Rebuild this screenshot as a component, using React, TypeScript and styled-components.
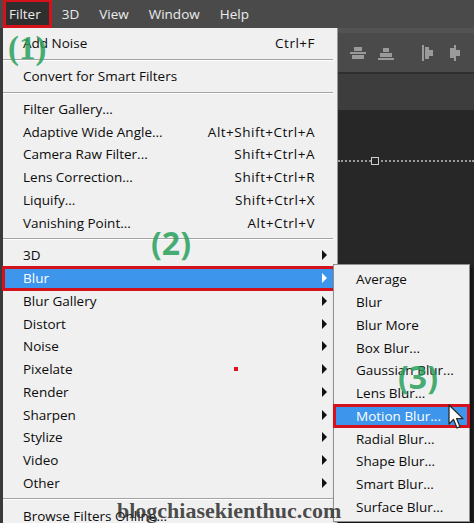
import React from "react";
import styled, { createGlobalStyle } from "styled-components";

const GlobalStyle = createGlobalStyle`
  html, body {
    margin: 0;
    padding: 0;
    background: #282828;
  }
`;

const Screen = styled.div`
  position: relative;
  width: 474px;
  height: 523px;
  overflow: hidden;
  background: #282828;
  font-family: "Open Sans", "Noto Sans", sans-serif;
  display: flex;
  flex-direction: column;
`;

const MenuBar = styled.div`
  height: 28px;
  flex: none;
  display: flex;
  align-items: stretch;
  background: #4a4a4a;
  padding-left: 3px;
`;

const MenuBarItem = styled.div<{ active?: boolean }>`
  display: flex;
  align-items: center;
  padding: 0 10px;
  color: #ececec;
  font-size: 13.5px;
  box-sizing: border-box;
  ${({ active }) =>
    active &&
    `
    background: #2f2f2f;
    border: 3px solid #d3121c;
    border-top-width: 2px;
    padding: 0 8px 0 3px;
  `}
`;

const Body = styled.div`
  flex: 1;
  display: flex;
  min-height: 0;
`;

const Gutter = styled.div`
  width: 3px;
  flex: none;
  background: #3a3a3a;
`;

const Dropdown = styled.div`
  width: 334px;
  flex: none;
  background: #f0f0f0;
  border-right: 1px solid #9a9a9a;
  padding-top: 4px;
  box-sizing: content-box;
`;

const Row = styled.div<{ selected?: boolean; indent?: number }>`
  position: relative;
  height: 22.75px;
  display: flex;
  align-items: center;
  padding: 0 22px 0 ${({ indent }) => indent ?? 20}px;
  font-size: 13.5px;
  color: ${({ selected }) => (selected ? "#ffffff" : "#0c0c0c")};
  background: ${({ selected }) => (selected ? "#3d95ec" : "transparent")};
  white-space: nowrap;
  ${({ selected }) =>
    selected &&
    `
    outline: 3px solid #d3121c;
    outline-offset: -2px;
  `}
`;

const Label = styled.span`
  flex: 1;
`;

const Shortcut = styled.span`
  text-align: right;
  letter-spacing: 0.5px;
`;

const Arrow = styled.span<{ light?: boolean }>`
  position: absolute;
  right: 10px;
  top: 50%;
  margin-top: -5px;
  width: 0;
  height: 0;
  border-top: 5px solid transparent;
  border-bottom: 5px solid transparent;
  border-left: 5px solid ${({ light }) => (light ? "#ffffff" : "#111111")};
`;

const Separator = styled.div`
  height: 10px;
  display: flex;
  align-items: center;
  padding: 0 4px 0 0;

  &::after {
    content: "";
    flex: 1;
    height: 1px;
    background: #a4a4a4;
    border-bottom: 1px solid #ffffff;
  }
`;

const Workspace = styled.div`
  flex: 1;
  display: flex;
  flex-direction: column;
`;

const TopBand = styled.div`
  height: 5px;
  background: #535353;
`;

const Toolbar = styled.div`
  height: 39px;
  background: #4a4a4a;
  border-bottom: 2px solid #2e2e2e;
  display: flex;
  align-items: center;
  gap: 12px;
  padding-left: 12px;
`;

const ToolSpacer = styled.span`
  width: 1px;
`;

const OptionsBand = styled.div`
  height: 36px;
  background: #3d3d3d;
`;

const Canvas = styled.div`
  flex: 1;
  background: #272727;
  padding-top: 48px;
`;

const Guide = styled.div`
  position: relative;
  height: 6px;
  display: flex;
  align-items: center;

  &::before {
    content: "";
    flex: 1;
    border-top: 2px dotted #9a9a9a;
  }
`;

const Handle = styled.span`
  position: absolute;
  left: 33px;
  top: -1px;
  width: 6px;
  height: 6px;
  border: 1px solid #cfcfcf;
  background: #272727;
`;

const Submenu = styled.div`
  position: absolute;
  left: 333px;
  top: 264px;
  width: 137px;
  height: 258px;
  padding-top: 3px;
  box-sizing: border-box;
  background: #f0f0f0;
  border: 1px solid #8f8f8f;
  box-shadow: 3px 3px 4px rgba(0, 0, 0, 0.55);
`;

const Note = styled.span<{ x: number; y: number; serif?: boolean }>`
  position: absolute;
  left: ${({ x }) => x}px;
  top: ${({ y }) => y}px;
  font-family: ${({ serif }) =>
    serif ? '"Liberation Serif", "DejaVu Serif", serif' : '"Open Sans", "Noto Sans", sans-serif'};
  font-weight: 700;
  font-size: ${({ serif }) => (serif ? 33 : 32)}px;
  line-height: 1;
  color: rgba(40, 160, 90, 0.85);
  pointer-events: none;
`;

const Watermark = styled.span`
  position: absolute;
  left: 117px;
  top: 500px;
  font-family: "Liberation Serif", "DejaVu Serif", serif;
  font-weight: 700;
  font-size: 22px;
  line-height: 1;
  color: rgba(45, 45, 45, 0.85);
  pointer-events: none;
`;

const Dot = styled.span`
  position: absolute;
  left: 234px;
  top: 367px;
  width: 4px;
  height: 4px;
  background: #e0101c;
`;

const Cursor = styled.svg`
  position: absolute;
  left: 447px;
  top: 404px;
`;

const ToolIcon = ({ kind }: { kind: number }) => (
  <svg width="16" height="18" viewBox="0 0 16 18">
    {kind === 0 && (
      <g fill="#9a9a9a">
        <rect x="0" y="8" width="16" height="2" />
        <rect x="4" y="3" width="8" height="4" />
        <rect x="2" y="11" width="12" height="4" />
      </g>
    )}
    {kind === 1 && (
      <g fill="#9a9a9a">
        <rect x="0" y="14" width="16" height="2" />
        <rect x="5" y="4" width="6" height="4" />
        <rect x="2" y="9" width="12" height="4" />
      </g>
    )}
    {kind === 2 && (
      <g fill="#9a9a9a">
        <rect x="3" y="1" width="2" height="16" />
        <rect x="6" y="3" width="4" height="12" />
        <rect x="10" y="6" width="4" height="6" />
      </g>
    )}
    {kind === 3 && (
      <g fill="#9a9a9a">
        <rect x="7" y="1" width="2" height="16" />
        <rect x="3" y="4" width="4" height="10" />
        <rect x="9" y="6" width="4" height="6" />
      </g>
    )}
  </svg>
);

type Item =
  | { sep: true }
  | { label: string; shortcut?: string; sub?: boolean; selected?: boolean };

const filterItems: Item[] = [
  { label: "Add Noise", shortcut: "Ctrl+F" },
  { sep: true },
  { label: "Convert for Smart Filters" },
  { sep: true },
  { label: "Filter Gallery..." },
  { label: "Adaptive Wide Angle...", shortcut: "Alt+Shift+Ctrl+A" },
  { label: "Camera Raw Filter...", shortcut: "Shift+Ctrl+A" },
  { label: "Lens Correction...", shortcut: "Shift+Ctrl+R" },
  { label: "Liquify...", shortcut: "Shift+Ctrl+X" },
  { label: "Vanishing Point...", shortcut: "Alt+Ctrl+V" },
  { sep: true },
  { label: "3D", sub: true },
  { label: "Blur", sub: true, selected: true },
  { label: "Blur Gallery", sub: true },
  { label: "Distort", sub: true },
  { label: "Noise", sub: true },
  { label: "Pixelate", sub: true },
  { label: "Render", sub: true },
  { label: "Sharpen", sub: true },
  { label: "Stylize", sub: true },
  { label: "Video", sub: true },
  { label: "Other", sub: true },
  { sep: true },
  { label: "Browse Filters Online..." },
];

const blurItems = [
  "Average",
  "Blur",
  "Blur More",
  "Box Blur...",
  "Gaussian Blur...",
  "Lens Blur...",
  "Motion Blur...",
  "Radial Blur...",
  "Shape Blur...",
  "Smart Blur...",
  "Surface Blur...",
];

export default function App() {
  return (
    <Screen>
      <GlobalStyle />
      <MenuBar>
        <MenuBarItem active>Filter</MenuBarItem>
        <MenuBarItem>3D</MenuBarItem>
        <MenuBarItem>View</MenuBarItem>
        <MenuBarItem>Window</MenuBarItem>
        <MenuBarItem>Help</MenuBarItem>
      </MenuBar>
      <Body>
        <Gutter />
        <Dropdown>
          {filterItems.map((item, i) =>
            "sep" in item ? (
              <Separator key={i} />
            ) : (
              <Row key={i} selected={item.selected}>
                <Label>{item.label}</Label>
                {item.shortcut && <Shortcut>{item.shortcut}</Shortcut>}
                {item.sub && <Arrow light={item.selected} />}
              </Row>
            )
          )}
        </Dropdown>
        <Workspace>
          <TopBand />
          <Toolbar>
            <ToolIcon kind={0} />
            <ToolIcon kind={1} />
            <ToolSpacer />
            <ToolIcon kind={2} />
            <ToolIcon kind={3} />
          </Toolbar>
          <OptionsBand />
          <Canvas>
            <Guide>
              <Handle />
            </Guide>
          </Canvas>
        </Workspace>
      </Body>

      <Submenu>
        {blurItems.map((label) => (
          <Row key={label} indent={22} selected={label === "Motion Blur..."}>
            <Label>{label}</Label>
          </Row>
        ))}
      </Submenu>

      <Dot />
      <Note x={8} y={32} serif>
        (1)
      </Note>
      <Note x={151} y={227}>
        (2)
      </Note>
      <Note x={398} y={361}>
        (3)
      </Note>
      <Watermark>blogchiasekienthuc.com</Watermark>
      <Cursor width="18" height="26" viewBox="0 0 18 26">
        <path
          d="M2 1 L2 20 L6.5 15.5 L10 24 L13 22.7 L9.6 14.6 L16 14.6 Z"
          fill="#ffffff"
          stroke="#2a2a2a"
          strokeWidth="1.3"
          strokeLinejoin="round"
        />
      </Cursor>
    </Screen>
  );
}
